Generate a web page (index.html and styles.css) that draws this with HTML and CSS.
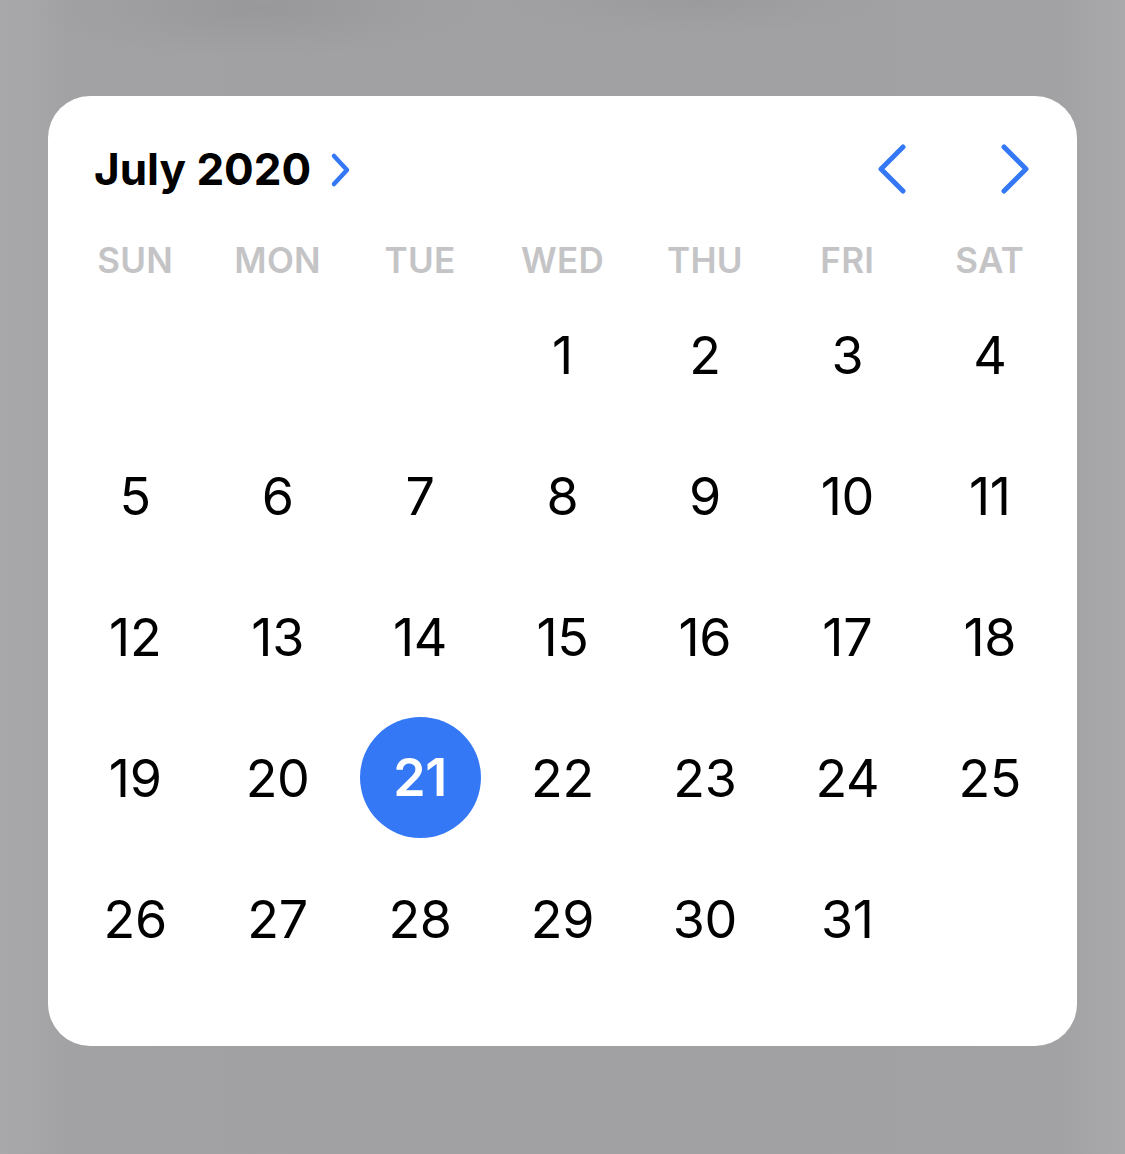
FILE: index.html
```html
<!DOCTYPE html>
<html lang="en">
<head>
<meta charset="utf-8">
<title>Calendar</title>
<link rel="stylesheet" href="styles.css">
</head>
<body>
<div class="backdrop">
  <section class="calendar">
    <header class="cal-header">
      <button class="month-title" type="button">
        <span class="month-label">July 2020</span>
        <svg class="month-chevron" viewBox="0 0 22 36" width="22" height="36" aria-hidden="true">
          <path d="M5 4 L18 18 L5 32" />
        </svg>
      </button>
      <div class="month-nav">
        <button class="nav-btn" type="button" aria-label="Previous month">
          <svg viewBox="0 0 30 50" width="30" height="50" aria-hidden="true">
            <path d="M26 3 L4 25 L26 47" />
          </svg>
        </button>
        <button class="nav-btn" type="button" aria-label="Next month">
          <svg viewBox="0 0 30 50" width="30" height="50" aria-hidden="true">
            <path d="M4 3 L26 25 L4 47" />
          </svg>
        </button>
      </div>
    </header>

    <div class="weekdays">
      <span>SUN</span><span>MON</span><span>TUE</span><span>WED</span><span>THU</span><span>FRI</span><span>SAT</span>
    </div>

    <div class="days">
      <span></span><span></span><span></span>
      <span>1</span><span>2</span><span>3</span><span>4</span>
      <span>5</span><span>6</span><span>7</span><span>8</span><span>9</span><span>10</span><span>11</span>
      <span>12</span><span>13</span><span>14</span><span>15</span><span>16</span><span>17</span><span>18</span>
      <span>19</span><span>20</span><span class="selected"><b>21</b></span><span>22</span><span>23</span><span>24</span><span>25</span>
      <span>26</span><span>27</span><span>28</span><span>29</span><span>30</span><span>31</span><span></span>
    </div>
  </section>
</div>
</body>
</html>
```

FILE: styles.css
```css
html, body {
  margin: 0;
  padding: 0;
}

body {
  font-family: Inter, "Noto Sans", "Liberation Sans", sans-serif;
  color: #000;
}

/* blurred grey wallpaper behind the sheet */
.backdrop {
  height: 1154px;
  box-sizing: border-box;
  padding-top: 96px;
  background:
    radial-gradient(ellipse 220px 50px at 260px 8px, rgba(120, 120, 124, 0.22), rgba(120, 120, 124, 0) 100%),
    radial-gradient(ellipse 200px 36px at 700px 0px, rgba(120, 120, 124, 0.16), rgba(120, 120, 124, 0) 100%),
    linear-gradient(90deg, #a9a9ac 0%, #a2a2a5 6%, #a1a1a4 50%, #a2a2a5 94%, #a9a9ac 100%);
}

.calendar {
  width: 1029px;
  height: 950px;
  margin-left: 48px;
  box-sizing: border-box;
  padding: 43px 16px 0 16px;
  background: #fff;
  border-radius: 42px;
}

.cal-header {
  display: flex;
  align-items: center;
  justify-content: space-between;
  height: 60px;
  padding: 0 31px 0 30px;
  margin-bottom: 36px;
}

button {
  font: inherit;
  background: none;
  border: 0;
  padding: 0;
  margin: 0;
  cursor: pointer;
}

.month-title {
  display: flex;
  align-items: center;
  gap: 18px;
  color: #000;
}

.month-label {
  font-size: 44px;
  font-weight: 700;
  line-height: 60px;
  letter-spacing: 0;
}

.month-chevron path,
.nav-btn path {
  fill: none;
  stroke: #3478f6;
  stroke-linecap: round;
  stroke-linejoin: round;
}

.month-chevron path {
  stroke-width: 4.5;
}

.month-chevron {
  margin-top: 2px;
}

.month-nav {
  display: flex;
  align-items: center;
  gap: 93px;
}

.nav-btn {
  display: block;
  width: 30px;
  height: 50px;
}

.nav-btn svg {
  display: block;
}

.nav-btn path {
  stroke-width: 5;
}

.weekdays,
.days {
  display: grid;
  grid-template-columns: repeat(7, 1fr);
  text-align: center;
}

.weekdays span {
  font-size: 35px;
  font-weight: 600;
  line-height: 50px;
  color: #c4c4c6;
  letter-spacing: 0.3px;
}

.days span {
  display: flex;
  align-items: center;
  justify-content: center;
  height: 141px;
  font-size: 52px;
  font-weight: 400;
  letter-spacing: -0.3px;
}

.days .selected b {
  display: flex;
  align-items: center;
  justify-content: center;
  width: 121px;
  height: 121px;
  border-radius: 50%;
  background: #3478f6;
  color: #fff;
  font-weight: 600;
  margin-top: -3px;
}
```
